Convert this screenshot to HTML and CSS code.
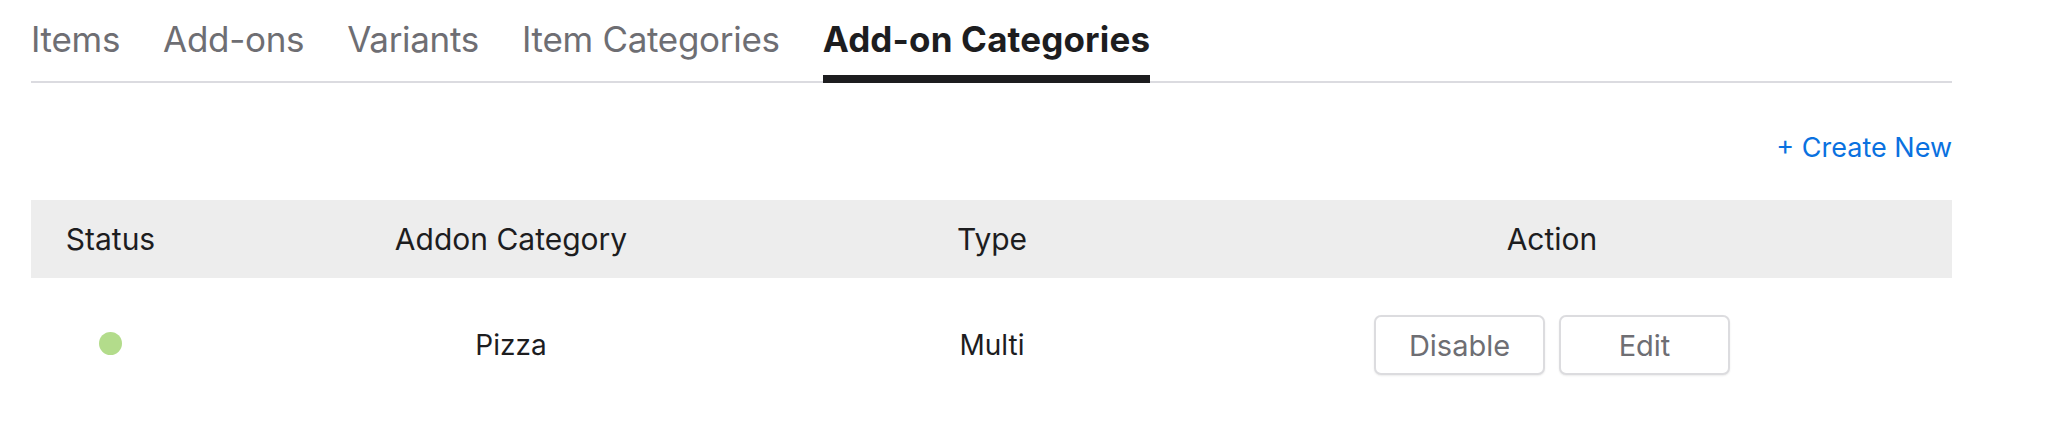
FILE: index.html
```html
<!DOCTYPE html>
<html lang="en">
<head>
    <meta charset="UTF-8">
    <meta name="viewport" content="width=device-width, initial-scale=1.0">
    <title>Add-on Categories</title>
    <link rel="stylesheet" href="styles.css">
</head>
<body>
    <div class="page">
        <nav class="tabs">
            <a href="#" class="tab">Items</a>
            <a href="#" class="tab">Add-ons</a>
            <a href="#" class="tab">Variants</a>
            <a href="#" class="tab">Item Categories</a>
            <a href="#" class="tab active">Add-on Categories</a>
        </nav>

        <div class="toolbar">
            <a href="#" class="create-link">+ Create New</a>
        </div>

        <div class="table">
            <div class="table-head">
                <div class="cell">Status</div>
                <div class="cell">Addon Category</div>
                <div class="cell">Type</div>
                <div class="cell">Action</div>
            </div>
            <div class="table-row">
                <div class="cell"><span class="status-dot"></span></div>
                <div class="cell">Pizza</div>
                <div class="cell">Multi</div>
                <div class="cell actions">
                    <button class="btn">Disable</button>
                    <button class="btn">Edit</button>
                </div>
            </div>
        </div>
    </div>
</body>
</html>
```

FILE: styles.css
```css
* {
    margin: 0;
    padding: 0;
    box-sizing: border-box;
}

body {
    font-family: "Inter", "Liberation Sans", sans-serif;
    background-color: #fff;
    color: #1d1d1f;
}

.page {
    padding: 18px 96px 0 31px;
}

/* tabs */
.tabs {
    display: flex;
    gap: 43px;
    border-bottom: 2px solid #dbdbe0;
}

.tab {
    font-size: 35px;
    line-height: 42px;
    color: #6e6e73;
    text-decoration: none;
    padding-bottom: 15px;
    border-bottom: 8px solid transparent;
    margin-bottom: -2px;
    letter-spacing: -0.3px;
}

.tab.active {
    color: #1d1d1f;
    font-weight: 700;
    letter-spacing: 0.15px;
    border-bottom-color: #1d1d1f;
}

/* create new */
.toolbar {
    display: flex;
    justify-content: flex-end;
    margin-top: 48px;
    margin-bottom: 36px;
}

.create-link {
    font-size: 27px;
    line-height: 33px;
    color: #0a71e0;
    text-decoration: none;
}

/* table */
.table-head,
.table-row {
    display: grid;
    grid-template-columns: 159px 642px 320px 1fr;
    align-items: center;
}

.table-head {
    background-color: #ededed;
    height: 78px;
    font-size: 30px;
}

.table-row {
    padding: 37px 0;
    font-size: 28px;
}

.cell {
    display: flex;
    justify-content: center;
    align-items: center;
}

.status-dot {
    width: 23px;
    height: 23px;
    border-radius: 50%;
    background-color: #b3dc8b;
    margin-top: -4px;
}

.actions {
    gap: 14px;
}

.btn {
    width: 171px;
    height: 60px;
    font-family: inherit;
    font-size: 29px;
    color: #6e6e73;
    background-color: #fff;
    border: 2px solid #dcdcdf;
    border-radius: 7px;
    box-shadow: 0 1px 2px rgba(0, 0, 0, 0.08);
    cursor: pointer;
}
```
